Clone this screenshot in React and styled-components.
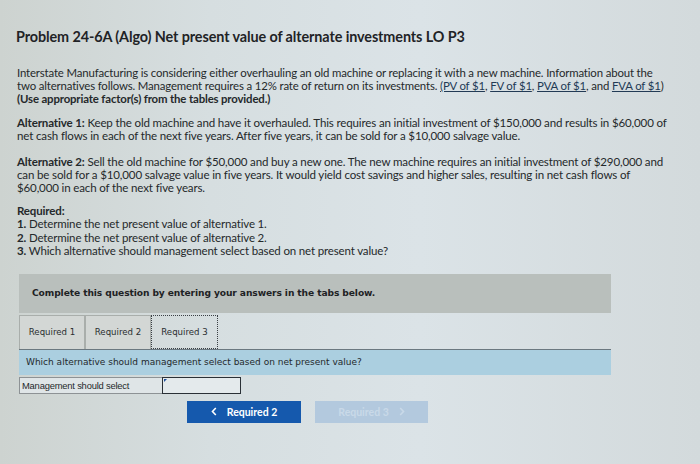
import React from 'react';
import styled, { createGlobalStyle } from 'styled-components';

const GlobalStyle = createGlobalStyle`
  html, body {
    margin: 0;
    padding: 0;
  }
  body {
    width: 700px;
    height: 464px;
    overflow: hidden;
    background: linear-gradient(90deg, #cdd3d0 0%, #d6dee0 30%, #dbe3e7 60%, #d3dadc 100%);
    color: #25292b;
    font-family: 'Lato', 'Liberation Sans', sans-serif;
  }
`;

const Page = styled.div`
  padding: 28px 0 0 16px;
`;

const Title = styled.h1`
  margin: 0;
  font-size: 14.4px;
  line-height: 17px;
  font-weight: 700;
  color: #1f2326;
  letter-spacing: -0.1px;
  white-space: nowrap;
`;

const Para = styled.p`
  margin: ${(p) => p.$top || 0}px 0 0 1px;
  font-size: ${(p) => p.$size || 11.4}px;
  line-height: 13px;
  letter-spacing: ${(p) => p.$ls ?? -0.15}px;
  white-space: nowrap;
`;

const Strong = styled.strong`
  font-weight: 700;
`;

const Link = styled.span`
  text-decoration: underline;
  color: #223a55;
`;

const RequiredList = styled.div`
  margin: 10px 0 0 1px;
  font-size: 11.5px;
  line-height: 13.4px;
  letter-spacing: -0.15px;
  white-space: nowrap;
`;

const Panel = styled.div`
  margin: 16px 0 0 3px;
  width: 592px;
  font-family: 'DejaVu Sans', Verdana, sans-serif;
`;

const Notice = styled.div`
  height: 39px;
  display: flex;
  align-items: center;
  padding-left: 13px;
  background: #b9bfbc;
  font-size: 9.15px;
  font-weight: 700;
  color: #1e2224;
  letter-spacing: -0.1px;
`;

const Tabs = styled.div`
  display: flex;
  margin-top: 2px;
  height: 34px;
`;

const Tab = styled.div`
  width: ${(p) => p.$w}px;
  display: flex;
  align-items: center;
  justify-content: center;
  box-sizing: border-box;
  font-size: 8.6px;
  color: #2a2e30;
  background: ${(p) => (p.$active ? 'transparent' : '#d3d7d5')};
  border: ${(p) => (p.$active ? '1px dotted #3a3f44' : '1px solid #a9aeab')};
  border-bottom: ${(p) => (p.$active ? '1px dotted #3a3f44' : 'none')};
`;

const Question = styled.div`
  height: 25px;
  display: flex;
  align-items: center;
  padding-left: 7px;
  border-top: 1px solid #6b7880;
  background: #abcfe0;
  font-size: 9px;
  color: #24292c;
`;

const AnswerRow = styled.div`
  display: flex;
  margin-top: 2px;
  height: 17px;
`;

const AnswerLabel = styled.div`
  width: 143px;
  box-sizing: border-box;
  border: 1px solid #8d9295;
  border-right: none;
  display: flex;
  align-items: center;
  padding-left: 2px;
  font-family: 'Liberation Sans', Arial, sans-serif;
  font-size: 9.4px;
  letter-spacing: -0.2px;
  background: #dfe5e7;
`;

const AnswerInput = styled.div`
  width: 79px;
  box-sizing: border-box;
  border: 1.5px solid #2a3036;
  background: #e4eaec;
  position: relative;
`;

const Caret = styled.span`
  position: absolute;
  left: 1px;
  top: 1px;
  width: 0;
  height: 0;
  border-left: 3px solid #1e4f9c;
  border-bottom: 3px solid transparent;
`;

const Nav = styled.div`
  display: flex;
  gap: 14px;
  margin: 7px 0 0 168px;
`;

const NavButton = styled.div`
  width: ${(p) => p.$w}px;
  height: 22px;
  display: flex;
  align-items: center;
  justify-content: center;
  gap: 10px;
  font-family: 'Lato', 'Liberation Sans', sans-serif;
  font-size: 10.5px;
  font-weight: 700;
  color: ${(p) => (p.$disabled ? '#c9d9e8' : '#ffffff')};
  background: ${(p) => (p.$disabled ? '#b3c9de' : '#1559ad')};
`;

const Chevron = ({ dir }) => (
  <svg width="6" height="9" viewBox="0 0 6 9">
    <path
      d={dir === 'left' ? 'M4.8 1 L1.5 4.5 L4.8 8' : 'M1.2 1 L4.5 4.5 L1.2 8'}
      fill="none"
      stroke="currentColor"
      strokeWidth="1.6"
    />
  </svg>
);

export default function App() {
  return (
    <>
      <GlobalStyle />
      <Page>
        <Title>Problem 24-6A (Algo) Net present value of alternate investments LO P3</Title>

        <Para $top={21}>
          Interstate Manufacturing is considering either overhauling an old machine or replacing it with a new
          machine. Information about the
          <br />
          two alternatives follows. Management requires a 12% rate of return on its investments.{' '}
          <Link>(PV of $1</Link>, <Link>FV of $1</Link>, <Link>PVA of $1</Link>, and <Link>FVA of $1</Link>)
          <br />
          <Strong>(Use appropriate factor(s) from the tables provided.)</Strong>
        </Para>

        <Para $top={11} $size={11.55}>
          <Strong>Alternative 1:</Strong> Keep the old machine and have it overhauled. This requires an initial
          investment of $150,000 and results in $60,000 of
          <br />
          net cash flows in each of the next five years. After five years, it can be sold for a $10,000 salvage value.
        </Para>

        <Para $top={13} $size={11.55}>
          <Strong>Alternative 2:</Strong> Sell the old machine for $50,000 and buy a new one. The new machine requires
          an initial investment of $290,000 and
          <br />
          can be sold for a $10,000 salvage value in five years. It would yield cost savings and higher sales,
          resulting in net cash flows of
          <br />
          $60,000 in each of the next five years.
        </Para>

        <RequiredList>
          <Strong>Required:</Strong>
          <br />
          <Strong>1.</Strong> Determine the net present value of alternative 1.
          <br />
          <Strong>2.</Strong> Determine the net present value of alternative 2.
          <br />
          <Strong>3.</Strong> Which alternative should management select based on net present value?
        </RequiredList>

        <Panel>
          <Notice>Complete this question by entering your answers in the tabs below.</Notice>

          <Tabs>
            <Tab $w={66}>Required 1</Tab>
            <Tab $w={66}>Required 2</Tab>
            <Tab $w={67} $active>
              Required 3
            </Tab>
          </Tabs>

          <Question>Which alternative should management select based on net present value?</Question>

          <AnswerRow>
            <AnswerLabel>Management should select</AnswerLabel>
            <AnswerInput>
              <Caret />
            </AnswerInput>
          </AnswerRow>

          <Nav>
            <NavButton $w={114}>
              <Chevron dir="left" />
              Required 2
            </NavButton>
            <NavButton $w={113} $disabled>
              Required 3
              <Chevron dir="right" />
            </NavButton>
          </Nav>
        </Panel>
      </Page>
    </>
  );
}
